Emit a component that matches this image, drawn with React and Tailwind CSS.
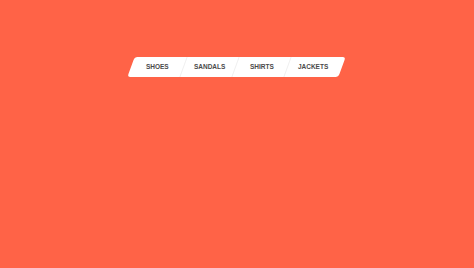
import React from "react";

const items = ["SHOES", "SANDALS", "SHIRTS", "JACKETS"];

export default function App() {
  return (
    <div className="w-[474px] h-[268px] bg-[#ff6347] pt-[57px] pl-[131px]">
      <div className="flex w-[211px] h-[20px] bg-white rounded-[3px] -skew-x-[20deg]">
        {items.map((t, i) => (
          <div
            key={t}
            className={
              "w-[52px] h-full flex items-center justify-center " +
              (i > 0 ? "border-l border-[#f0f0f0]" : "")
            }
          >
            <span
              className="skew-x-[20deg] text-[6.5px] font-bold text-[#4a4a4a] leading-none"
              style={{ fontFamily: '"Liberation Sans", Arial, sans-serif' }}
            >
              {t}
            </span>
          </div>
        ))}
      </div>
    </div>
  );
}
